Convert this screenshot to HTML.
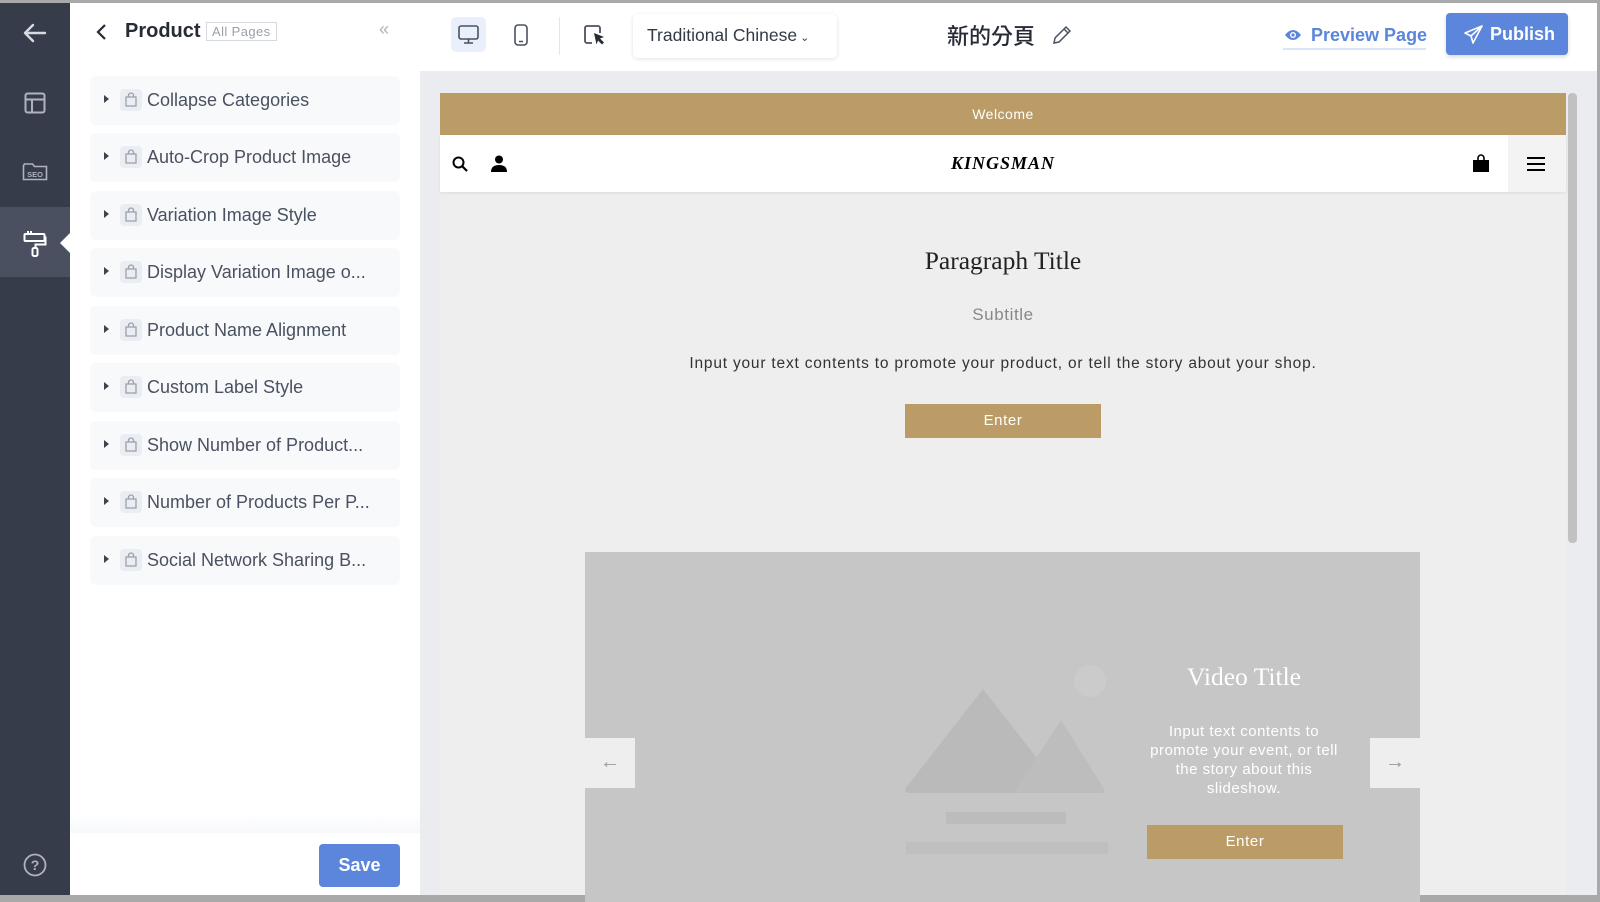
<!DOCTYPE html>
<html><head><meta charset="utf-8">
<style>
*{box-sizing:border-box;margin:0;padding:0}
body{width:1600px;height:898px;overflow:hidden;background:#a9a9a9;font-family:"Liberation Sans","Noto Sans CJK TC",sans-serif;position:relative}
.abs{position:absolute}
#rail{left:0;top:3px;width:70px;height:892px;background:#363c4a}
#panel{left:70px;top:3px;width:350px;height:892px;background:#fff}
#top{left:420px;top:3px;width:1177px;height:68px;background:#fff}
#canvas{left:420px;top:71px;width:1177px;height:824px;background:#ebecef}
.row{position:absolute;left:20px;width:310px;height:49px;background:#f8f9fb;border-radius:6px;font-size:18px;color:#4a5160}
.row .tri{position:absolute;left:14px;top:19px;width:0;height:0;border-left:5px solid #3d4350;border-top:4.5px solid transparent;border-bottom:4.5px solid transparent}
.row .bag{position:absolute;left:30px;top:13px;width:22px;height:22px;background:#eaedf2 url() no-repeat;border-radius:4px}
.row svg{position:absolute;left:35px;top:16px}
.row span{position:absolute;left:57px;top:14px;white-space:nowrap}
.btn{position:absolute;background:#bb9c66;color:#fff;text-align:center;font-size:15px;letter-spacing:.6px}
</style></head><body>
<div id="rail" class="abs">
 <svg class="abs" style="left:23px;top:20px" width="24" height="20" viewBox="0 0 24 20"><path d="M22 10H3M10 2L2 10l8 8" stroke="#d7dae0" stroke-width="2.4" fill="none" stroke-linecap="round" stroke-linejoin="round"/></svg>
 <svg class="abs" style="left:24px;top:89px" width="22" height="22" viewBox="0 0 22 22"><rect x="1.5" y="1.5" width="19" height="19" rx="2" stroke="#aeb3bd" stroke-width="2" fill="none"/><path d="M1.5 7.5h19M8 7.5v13" stroke="#aeb3bd" stroke-width="2"/></svg>
 <svg class="abs" style="left:22px;top:159px" width="26" height="20" viewBox="0 0 26 20"><path d="M1.5 3.5v14h23v-13h-12l-2-2.5h-8z" stroke="#aeb3bd" stroke-width="1.6" fill="none"/><text x="13" y="15" font-size="7.5" font-weight="bold" fill="#aeb3bd" text-anchor="middle" font-family="Liberation Sans">SEO</text></svg>
 <div class="abs" style="left:0;top:204px;width:70px;height:70px;background:#4a5060"></div>
 <div class="abs" style="left:60px;top:230px;width:0;height:0;border-right:10px solid #fff;border-top:10px solid transparent;border-bottom:10px solid transparent"></div>
 <svg class="abs" style="left:23px;top:226px" width="24" height="30" viewBox="0 0 24 30"><rect x="1.5" y="5" width="20" height="7" rx="1" stroke="#fff" stroke-width="2" fill="none"/><path d="M5 2v4M8 2v4M21.5 8.5h1v7h-10v4" stroke="#fff" stroke-width="2" fill="none"/><rect x="9.5" y="19" width="5" height="8" rx="1.5" stroke="#fff" stroke-width="2" fill="none"/></svg>
 <svg class="abs" style="left:23px;top:850px" width="24" height="24" viewBox="0 0 24 24"><circle cx="12" cy="12" r="10.5" stroke="#aeb3bd" stroke-width="1.8" fill="none"/><text x="12" y="17" font-size="14" font-weight="bold" fill="#aeb3bd" text-anchor="middle" font-family="Liberation Sans">?</text></svg>
</div>
<div id="panel" class="abs">
 <svg class="abs" style="left:26px;top:20px" width="12" height="18" viewBox="0 0 12 18"><path d="M9 2L2 9l7 7" stroke="#262b35" stroke-width="2.2" fill="none"/></svg>
 <div class="abs" style="left:55px;top:17px;font-size:20px;font-weight:bold;color:#262b35">Product</div>
 <div class="abs" style="left:136px;top:19px;border:1px solid #d6d9de;color:#9aa0aa;font-size:13px;padding:1px 5px;letter-spacing:.4px">All Pages</div>
 <div class="abs" style="left:309px;top:16px;color:#a9b4c6;font-size:18px">«</div>
</div>
<div class="abs" style="left:70px;top:3px;width:350px;height:892px">
 <div class="row" style="top:73px"><i class="tri"></i><i class="bag"></i><svg width="12" height="15" viewBox="0 0 12 15"><path d="M1 5h10v9H1zM3.5 5V3.5a2.5 2.5 0 0 1 5 0V5" stroke="#9aa0aa" stroke-width="1.3" fill="none"/></svg><span>Collapse Categories</span></div>
 <div class="row" style="top:130px"><i class="tri"></i><i class="bag"></i><svg width="12" height="15" viewBox="0 0 12 15"><path d="M1 5h10v9H1zM3.5 5V3.5a2.5 2.5 0 0 1 5 0V5" stroke="#9aa0aa" stroke-width="1.3" fill="none"/></svg><span>Auto-Crop Product Image</span></div>
 <div class="row" style="top:188px"><i class="tri"></i><i class="bag"></i><svg width="12" height="15" viewBox="0 0 12 15"><path d="M1 5h10v9H1zM3.5 5V3.5a2.5 2.5 0 0 1 5 0V5" stroke="#9aa0aa" stroke-width="1.3" fill="none"/></svg><span>Variation Image Style</span></div>
 <div class="row" style="top:245px"><i class="tri"></i><i class="bag"></i><svg width="12" height="15" viewBox="0 0 12 15"><path d="M1 5h10v9H1zM3.5 5V3.5a2.5 2.5 0 0 1 5 0V5" stroke="#9aa0aa" stroke-width="1.3" fill="none"/></svg><span>Display Variation Image o...</span></div>
 <div class="row" style="top:303px"><i class="tri"></i><i class="bag"></i><svg width="12" height="15" viewBox="0 0 12 15"><path d="M1 5h10v9H1zM3.5 5V3.5a2.5 2.5 0 0 1 5 0V5" stroke="#9aa0aa" stroke-width="1.3" fill="none"/></svg><span>Product Name Alignment</span></div>
 <div class="row" style="top:360px"><i class="tri"></i><i class="bag"></i><svg width="12" height="15" viewBox="0 0 12 15"><path d="M1 5h10v9H1zM3.5 5V3.5a2.5 2.5 0 0 1 5 0V5" stroke="#9aa0aa" stroke-width="1.3" fill="none"/></svg><span>Custom Label Style</span></div>
 <div class="row" style="top:418px"><i class="tri"></i><i class="bag"></i><svg width="12" height="15" viewBox="0 0 12 15"><path d="M1 5h10v9H1zM3.5 5V3.5a2.5 2.5 0 0 1 5 0V5" stroke="#9aa0aa" stroke-width="1.3" fill="none"/></svg><span>Show Number of Product...</span></div>
 <div class="row" style="top:475px"><i class="tri"></i><i class="bag"></i><svg width="12" height="15" viewBox="0 0 12 15"><path d="M1 5h10v9H1zM3.5 5V3.5a2.5 2.5 0 0 1 5 0V5" stroke="#9aa0aa" stroke-width="1.3" fill="none"/></svg><span>Number of Products Per P...</span></div>
 <div class="row" style="top:533px"><i class="tri"></i><i class="bag"></i><svg width="12" height="15" viewBox="0 0 12 15"><path d="M1 5h10v9H1zM3.5 5V3.5a2.5 2.5 0 0 1 5 0V5" stroke="#9aa0aa" stroke-width="1.3" fill="none"/></svg><span>Social Network Sharing B...</span></div>
 <div class="abs" style="left:0;top:810px;width:350px;height:20px;background:linear-gradient(#fff,#f7f8fa)"></div>
 <div class="abs" style="left:249px;top:841px;width:81px;height:43px;background:#5b86dc;border-radius:4px;color:#fff;font-weight:bold;font-size:18px;text-align:center;line-height:43px">Save</div>
</div>
<div id="top" class="abs">
 <div class="abs" style="left:31px;top:14px;width:35px;height:35px;background:#eaf0fb;border-radius:5px"></div>
 <svg class="abs" style="left:38px;top:22px" width="21" height="19" viewBox="0 0 21 19"><rect x="1" y="1" width="19" height="13" rx="2" stroke="#4a5160" stroke-width="1.6" fill="none"/><path d="M10.5 14v4M6 18h9" stroke="#4a5160" stroke-width="1.6"/></svg>
 <svg class="abs" style="left:94px;top:21px" width="14" height="22" viewBox="0 0 14 22"><rect x="1" y="1" width="12" height="20" rx="3" stroke="#4a5160" stroke-width="1.6" fill="none"/><path d="M5 17.5h4" stroke="#4a5160" stroke-width="1.5"/></svg>
 <div class="abs" style="left:139px;top:14px;width:1px;height:38px;background:#e3e5e9"></div>
 <svg class="abs" style="left:163px;top:21px" width="24" height="24" viewBox="0 0 24 24"><path d="M9 19H4a2 2 0 0 1-2-2V4a2 2 0 0 1 2-2h11a2 2 0 0 1 2 2v5" stroke="#4a5160" stroke-width="1.8" fill="none"/><path d="M11 9l10 4-4 1.5 4 4-2 2-4-4-1.5 4z" fill="#262b35"/></svg>
 <div class="abs" style="left:213px;top:11px;width:204px;height:44px;border-radius:5px;box-shadow:0 1px 4px rgba(0,0,0,.12);font-size:17.5px;color:#333a47;line-height:42px;padding-left:14px">Traditional Chinese<span style="font-size:11px;margin-left:3px">⌄</span></div>
 <div class="abs" style="left:527px;top:16px;font-size:22px;color:#262b35;font-family:'Noto Sans CJK TC',sans-serif;font-weight:500">新的分頁</div>
 <svg class="abs" style="left:631px;top:21px" width="22" height="22" viewBox="0 0 22 22"><path d="M3 19l1-5L15 3l4 4L8 18zM13 5l4 4" stroke="#4a5160" stroke-width="1.5" fill="none"/></svg>
 <svg class="abs" style="left:864px;top:25px" width="18" height="14" viewBox="0 0 18 14"><path d="M1 7q8-10 16 0q-8 10-16 0z" fill="#5b86dc"/><circle cx="9" cy="7" r="3" fill="#fff"/><circle cx="9" cy="7" r="1.6" fill="#5b86dc"/></svg>
 <div class="abs" style="left:891px;top:22px;font-size:18px;font-weight:bold;color:#5b86dc">Preview Page</div>
 <div class="abs" style="left:863px;top:45px;width:143px;height:2px;background:#dbe5f8"></div>
 <div class="abs" style="left:1026px;top:10px;width:122px;height:42px;background:#5b86dc;border-radius:4px;box-shadow:0 2px 4px rgba(0,0,0,.15);color:#fff;font-size:18px;font-weight:bold;line-height:42px;padding-left:44px">Publish</div>
 <svg class="abs" style="left:1044px;top:22px" width="19" height="19" viewBox="0 0 19 19"><path d="M18 1L1 8l6 3 2 7zM7 11l11-10" stroke="#fff" stroke-width="1.6" fill="none" stroke-linejoin="round"/></svg>
</div>
<div id="canvas" class="abs">
 <div class="abs" style="left:20px;top:22px;width:1126px;height:802px;background:#eeeeee">
  <div class="abs" style="left:0;top:0;width:1126px;height:42px;background:#bb9c66;color:#fff;font-size:14px;text-align:center;line-height:42px;letter-spacing:.5px">Welcome</div>
  <div class="abs" style="left:0;top:42px;width:1126px;height:57px;background:#fff;box-shadow:0 1px 3px rgba(0,0,0,.08)">
   <svg class="abs" style="left:12px;top:21px" width="16" height="16" viewBox="0 0 16 16"><circle cx="6.5" cy="6.5" r="5" stroke="#000" stroke-width="2" fill="none"/><path d="M10 10l5 5" stroke="#000" stroke-width="2.2"/></svg>
   <svg class="abs" style="left:51px;top:20px" width="16" height="17" viewBox="0 0 16 17"><circle cx="8" cy="4.5" r="4" fill="#000"/><path d="M0 17q0-7 8-7t8 7z" fill="#000"/></svg>
   <div class="abs" style="left:0;width:1126px;top:18px;text-align:center;font-family:'Liberation Serif',serif;font-style:italic;font-weight:bold;font-size:18px;letter-spacing:1px">KINGSMAN</div>
   <svg class="abs" style="left:1032px;top:19px" width="18" height="19" viewBox="0 0 18 19"><path d="M6 6V4a3 3 0 0 1 6 0v2" stroke="#000" stroke-width="1.6" fill="none"/><path d="M1 6h16v12H1z" fill="#000"/></svg>
   <div class="abs" style="left:1068px;top:0;width:58px;height:57px;background:#f3f3f3"></div>
   <svg class="abs" style="left:1086px;top:21px" width="20" height="16" viewBox="0 0 20 16"><path d="M1 2h18M1 8h18M1 14h18" stroke="#000" stroke-width="2"/></svg>
  </div>
  <div class="abs" style="left:0;width:1126px;top:153px;text-align:center;font-family:'Liberation Serif',serif;font-size:25.5px;color:#222">Paragraph Title</div>
  <div class="abs" style="left:0;width:1126px;top:212px;text-align:center;font-size:17px;color:#888;letter-spacing:.6px">Subtitle</div>
  <div class="abs" style="left:0;width:1126px;top:262px;text-align:center;font-size:15.5px;color:#333;letter-spacing:.8px">Input your text contents to promote your product, or tell the story about your shop.</div>
  <div class="btn" style="left:465px;top:311px;width:196px;height:34px;line-height:34px">Enter</div>
  <div class="abs" style="left:145px;top:459px;width:835px;height:350px;background:#c6c6c6">
   <svg class="abs" style="left:320px;top:112px" width="210" height="190" viewBox="0 0 210 190">
    <circle cx="185" cy="17" r="16" fill="#cbcbcb"/>
    <path d="M78 25L0 125q0 4 4 4h150q4 0 2-4z" fill="#bababa"/>
    <path d="M156 56l-45 69q-2 4 2 4h84q4 0 2-4z" fill="#bdbdbd"/>
    <rect x="41" y="148" width="120" height="12" fill="#bcbcbc"/>
    <rect x="1" y="178" width="202" height="12" fill="#bfbfbf"/>
   </svg>
   <div class="abs" style="left:0;top:186px;width:50px;height:50px;background:#eee;color:#999;font-size:20px;text-align:center;line-height:48px">←</div>
   <div class="abs" style="left:785px;top:186px;width:50px;height:50px;background:#eee;color:#999;font-size:20px;text-align:center;line-height:48px">→</div>
   <div class="abs" style="left:520px;width:278px;top:110px;text-align:center;font-family:'Liberation Serif',serif;font-size:25.5px;color:#fff">Video Title</div>
   <div class="abs" style="left:554px;width:210px;top:170px;text-align:center;font-size:15px;line-height:19px;color:#fff;letter-spacing:.5px">Input text contents to promote your event, or tell the story about this slideshow.</div>
   <div class="btn" style="left:562px;top:273px;width:196px;height:34px;line-height:34px">Enter</div>
  </div>
 </div>
 <div class="abs" style="left:1148px;top:22px;width:9px;height:450px;background:#c1c1c1;border-radius:4px"></div>
</div>
</body></html>
